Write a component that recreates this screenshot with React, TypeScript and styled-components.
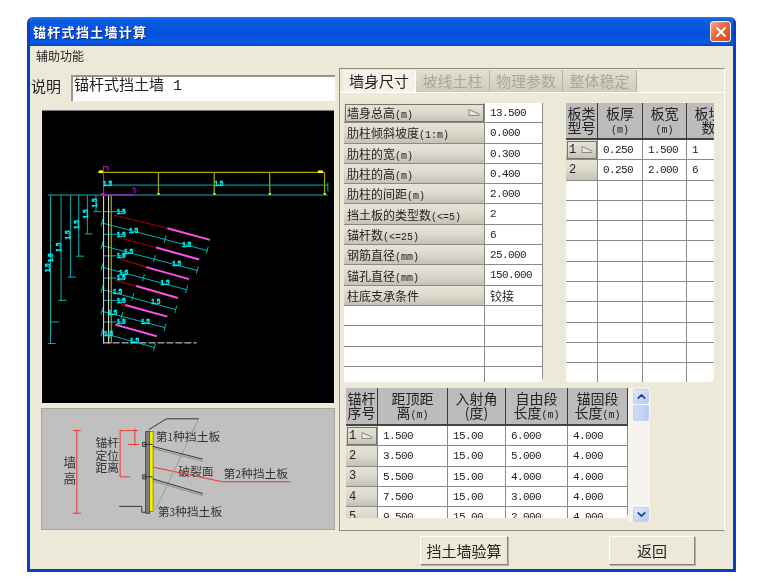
import React from 'react'
import styled, { createGlobalStyle } from 'styled-components'
import { ChevronUp, ChevronDown, X } from 'lucide-react'

const CJK = `"Liberation Mono", "Noto Sans CJK SC", monospace`

const GlobalStyle = createGlobalStyle`
  html, body { margin: 0; padding: 0; background: #fff; }
  body { font-family: ${CJK}; color: #222; }
`

const Page = styled.div`
  width: 760px;
  height: 584px;
  padding: 17px 0 0 27px;
  box-sizing: border-box;
  filter: blur(0.45px);
`

const Window = styled.div`
  width: 709px;
  height: 555px;
  box-sizing: border-box;
  border: 3px solid #0a3fc4;
  border-top: 0;
  border-radius: 6px 6px 0 0;
  background: #ece9d8;
  display: flex;
  flex-direction: column;
  overflow: hidden;
`

const TitleBar = styled.div`
  height: 29px;
  margin: 0 -3px;
  padding: 0 5px 0 6px;
  flex: none;
  display: flex;
  align-items: center;
  justify-content: space-between;
  background: linear-gradient(180deg, #1a78f0 0%, #0a5ce0 12%, #0650dc 60%, #0a5ae4 88%, #0443c0 100%);
`

const TitleText = styled.div`
  font-family: "Noto Sans CJK SC", sans-serif;
  font-size: 13px;
  font-weight: 700;
  letter-spacing: 1.3px;
  color: #fff;
  text-shadow: 1px 1px 1px #0a2a80;
`

const CloseButton = styled.div`
  width: 21px;
  height: 21px;
  box-sizing: border-box;
  border: 1px solid #f4f0ee;
  border-radius: 3px;
  background: linear-gradient(135deg, #f4ac8c 0%, #e8683e 45%, #d04420 100%);
  color: #fff;
  display: flex;
  align-items: center;
  justify-content: center;
`

const MenuBar = styled.div`
  height: 20px;
  flex: none;
  padding-left: 6px;
  font-size: 12px;
  line-height: 20px;
  font-family: "Noto Sans CJK SC", sans-serif;
`

const Main = styled.div`
  flex: none;
  height: 465px;
  display: flex;
`

const LeftColumn = styled.div`
  width: 309px;
  flex: none;
  display: flex;
  flex-direction: column;
  padding-top: 9px;
  box-sizing: border-box;
`

const NoteRow = styled.div`
  display: flex;
  align-items: center;
  height: 26px;
  padding-left: 1px;
`

const NoteLabel = styled.div`
  width: 40px;
  padding-bottom: 5px;
  font-family: "Noto Sans CJK SC", sans-serif;
  font-size: 15px;
`

const NoteInput = styled.div`
  width: 264px;
  height: 26px;
  box-sizing: border-box;
  padding-left: 1px;
  background: #fff;
  border-top: 2px solid #9a978a;
  border-left: 2px solid #9a978a;
  font-size: 15px;
  line-height: 20px;
  white-space: pre;
  font-family: ${CJK};
`

const Canvas = styled.div`
  width: 292px;
  height: 293px;
  margin: 9px 0 0 12px;
  background: #000;
  border-top: 1px solid #777;
  box-sizing: border-box;
`

const SchemePanel = styled.div`
  width: 294px;
  height: 122px;
  margin: 5px 0 0 11px;
  background: #c0c0c0;
  border: 1px solid #a9a79a;
  box-sizing: border-box;
`

const Drawing = styled.svg`
  display: block;
  width: 100%;
  height: 100%;
`

const TabPanel = styled.div`
  width: 386px;
  height: 463px;
  margin-top: 2px;
  box-sizing: border-box;
  border: 1px solid #8f8c7e;
  border-right-color: #fff;
  display: flex;
  flex-direction: column;
`

const TabStrip = styled.div`
  height: 22px;
  margin-top: 1px;
  padding-left: 3px;
  flex: none;
  display: flex;
`

const Tab = styled.div<{ $active?: boolean; $width: number }>`
  width: ${p => p.$width}px;
  flex: none;
  box-sizing: border-box;
  text-align: center;
  font-family: "Noto Sans CJK SC", sans-serif;
  font-size: 15px;
  line-height: 21px;
  color: ${p => (p.$active ? '#222' : '#a9a699')};
  background: ${p => (p.$active ? '#f4f2e6' : 'linear-gradient(180deg, #e2dfd0, #cfccbc)')};
  border-right: 1px solid ${p => (p.$active ? '#fff' : '#b5b2a4')};
`

const TabBody = styled.div`
  flex: 1;
  min-height: 0;
  display: flex;
  flex-direction: column;
  padding: 10px 0 0 4px;
  border-top: 1px solid #fff;
`

const TopTables = styled.div`
  display: flex;
  gap: 23px;
`

const Sheet = styled.div<{ $cols: string; $head: number; $width: number; $height: number }>`
  width: ${p => p.$width}px;
  height: ${p => p.$height}px;
  flex: none;
  overflow: hidden;
  display: grid;
  grid-template-columns: ${p => p.$cols};
  grid-template-rows: ${p => (p.$head ? `${p.$head}px ` : '')};
  grid-auto-rows: 20.3px;
  background: #fff;
  border-radius: 0 0 5px 0;
  font-size: 11px;
`

const HeadCell = styled.div`
  box-sizing: border-box;
  background: #bcbcbc;
  border-right: 1px solid #3a3a3a;
  border-bottom: 2px solid #444;
  font-family: "Noto Sans CJK SC", sans-serif;
  font-size: 14px;
  line-height: 14px;
  text-align: center;
  padding-top: 3px;
  white-space: nowrap;
  overflow: hidden;
`

const Unit = styled.span<{ $big?: boolean }>`
  font-family: "Liberation Mono", monospace;
  font-size: ${p => (p.$big ? 12 : 10)}px;
`

const RowHead = styled.div<{ $selected?: boolean }>`
  box-sizing: border-box;
  display: flex;
  align-items: center;
  justify-content: space-between;
  padding: 0 4px 0 3px;
  background: linear-gradient(180deg, #e6e3d8 0%, #dbd8cc 50%, #c4c1b6 100%);
  border-right: 1px solid #8a8a8a;
  border-bottom: 1px solid #8a8a8a;
  outline: ${p => (p.$selected ? '1px solid #77756c' : 'none')};
  outline-offset: -2px;
  font-family: "Noto Sans CJK SC", sans-serif;
  font-size: 12px;
  white-space: nowrap;
`

const Cell = styled.div`
  box-sizing: border-box;
  padding-left: 5px;
  border-right: 1px solid #8a8a8a;
  border-bottom: 1px solid #8a8a8a;
  background: #fff;
  font-size: 11px;
  letter-spacing: -0.6px;
  word-spacing: 0;
  line-height: 20px;
  white-space: nowrap;
  font-family: "Liberation Mono", "Noto Sans CJK SC", monospace;
`

const WideText = styled.span`
  font-family: "Noto Sans CJK SC", sans-serif;
  font-size: 12px;
  letter-spacing: 0;
`

const BottomRow = styled.div`
  display: flex;
  margin: 6px 0 0 2px;
`

const ScrollTrack = styled.div`
  width: 22px;
  height: 134px;
  flex: none;
  padding: 1px 1px 0 5px;
  box-sizing: border-box;
  background: #f5f4ee;
  display: flex;
  flex-direction: column;
`

const ScrollButton = styled.div`
  height: 15px;
  flex: none;
  border-radius: 2px;
  background: linear-gradient(135deg, #e4ecfc, #b4c8f4);
  border: 1px solid #c0d0f0;
  box-sizing: border-box;
  color: #1f3f90;
  display: flex;
  align-items: center;
  justify-content: center;
`

const ScrollThumb = styled.div`
  height: 16px;
  margin-top: 1px;
  flex: none;
  border-radius: 2px;
  background: linear-gradient(90deg, #cfdcfa, #b8ccf6);
  border: 1px solid #c4d2f2;
  box-sizing: border-box;
`

const ScrollGap = styled.div`
  flex: 1;
`

const Footer = styled.div`
  flex: 1;
  display: flex;
  align-items: flex-start;
  gap: 101px;
  padding: 5px 0 0 390px;
`

const DialogButton = styled.div<{ $width: number }>`
  width: ${p => p.$width}px;
  height: 29px;
  box-sizing: border-box;
  background: #ece9d8;
  border: 1px solid;
  border-color: #fff #8a887a #8a887a #fff;
  box-shadow: 1px 1px 0 #b5b2a4;
  font-family: "Noto Sans CJK SC", sans-serif;
  font-size: 15px;
  line-height: 27px;
  text-align: center;
`

const RowArrow = () => (
  <svg width="12" height="8" viewBox="0 0 12 8">
    <path d="M1 .5 L11 5 L11 6.5 L1 6.5 Z" fill="#e8e6dc" stroke="#8a887e" />
  </svg>
)

const HeadText = ({ lines }: { lines: [string, string] }) => {
  const m = lines[1].match(/^(.*?)(\(.*\))?$/)
  return (
    <>
      {lines[0]}
      <br />
      {m?.[1]}
      {m?.[2] && <Unit>{m[2]}</Unit>}
    </>
  )
}

const LabelText = ({ text }: { text: string }) => {
  const m = text.match(/^(.*?)(\(.*\))$/)
  if (!m) return <span>{text}</span>
  return (
    <span>
      {m[1]}
      <Unit>{m[2]}</Unit>
    </span>
  )
}

const wallRows: [string, string][] = [
  ['墙身总高(m)', '13.500'],
  ['肋柱倾斜坡度(1:m)', '0.000'],
  ['肋柱的宽(m)', '0.300'],
  ['肋柱的高(m)', '0.400'],
  ['肋柱的间距(m)', '2.000'],
  ['挡土板的类型数(<=5)', '2'],
  ['锚杆数(<=25)', '6'],
  ['钢筋直径(mm)', '25.000'],
  ['锚孔直径(mm)', '150.000'],
  ['柱底支承条件', '铰接'],
  ['', ''],
  ['', ''],
  ['', ''],
  ['', ''],
]

const plateRows = [
  ['1', '0.250', '1.500', '1'],
  ['2', '0.250', '2.000', '6'],
  ...Array.from({ length: 11 }, () => ['', '', '', '']),
]

const anchorRows = [
  ['1', '1.500', '15.00', '6.000', '4.000'],
  ['2', '3.500', '15.00', '5.000', '4.000'],
  ['3', '5.500', '15.00', '4.000', '4.000'],
  ['4', '7.500', '15.00', '3.000', '4.000'],
  ['5', '9.500', '15.00', '2.000', '4.000'],
]

// zoomed coordinates of the CAD picture -> page coordinates
const zx = (x: number) => 40 + x / 3
const zy = (y: number) => 150 + y / 3

const anchors = [
  [220, 193, 382, 233, 510, 268],
  [240, 263, 348, 291, 478, 327],
  [240, 325, 318, 350, 447, 386],
  [225, 390, 288, 407, 414, 443],
  [240, 460, 255, 464, 382, 499],
  [225, 523, 225, 523, 350, 558],
]

const anchorDims = [
  [185, 217, 502, 300, 375, 267],
  [185, 285, 472, 360, 343, 325],
  [185, 350, 440, 418, 310, 383],
  [185, 417, 407, 478, 278, 440],
  [185, 483, 375, 532, 245, 497],
  [185, 548, 343, 592, 210, 555],
]

const leftDims = [
  [30, 580],
  [62, 450],
  [90, 380],
  [115, 317],
  [141, 250],
  [167, 183],
]

const nailRows = [183, 251, 316, 383, 450, 515]

const dimTags = [
  [202, 98], [537, 98], [280, 240], [440, 283], [265, 302], [410, 340], [250, 365], [375, 397],
  [232, 425], [347, 455], [217, 488], [316, 513], [205, 550], [283, 572],
  [243, 184], [243, 251], [243, 316], [243, 383], [243, 450], [243, 515],
]

const sideTags = [
  [22, 352], [29, 322], [55, 290], [83, 253], [109, 222], [135, 190], [162, 157],
]

const CadDrawing = () => (
  <Drawing viewBox="42 110 292 293">
    <g stroke="#a8a800" fill="none" strokeWidth="1.2">
      <line x1={zx(175)} y1={zy(65)} x2={zx(855)} y2={zy(65)} />
      {[355, 523, 690, 855].map(x => (
        <line key={x} x1={zx(x)} y1={zy(65)} x2={zx(x)} y2={zy(130)} />
      ))}
      <line x1={zx(213)} y1={zy(133)} x2={zx(213)} y2={zy(580)} />
    </g>
    <rect x={zx(175)} y={zy(59)} width="5" height="2.6" fill="#ffff00" />
    <rect x={zx(835)} y={zy(59)} width="5" height="2.6" fill="#ffff00" />
    {[355, 523, 690, 855].map(x => (
      <rect key={x} x={zx(x) - 1} y={zy(127)} width="2.4" height="2" fill="#ffff00" />
    ))}
    <g stroke="#00b4b4" fill="none" strokeWidth="1">
      <line x1={zx(190)} y1={zy(103)} x2={zx(865)} y2={zy(103)} />
      <line x1={zx(865)} y1={zy(96)} x2={zx(865)} y2={zy(122)} />
      <line x1={zx(22)} y1={zy(133)} x2={zx(865)} y2={zy(133)} />
      {leftDims.map(([x, y]) => (
        <g key={x}>
          <line x1={zx(x)} y1={zy(133)} x2={zx(x)} y2={zy(y)} />
          <line x1={zx(x - 8)} y1={zy(y)} x2={zx(x + 16)} y2={zy(y)} />
        </g>
      ))}
      <line x1={zx(30)} y1={zy(515)} x2={zx(55)} y2={zy(515)} />
      {nailRows.map(y => (
        <line key={y} x1={zx(190)} y1={zy(y)} x2={zx(255)} y2={zy(y)} />
      ))}
      {anchorDims.map(([x1, y1, x2, y2, tx, ty]) => (
        <g key={y1}>
          <line x1={zx(x1)} y1={zy(y1)} x2={zx(x2)} y2={zy(y2)} />
          <line x1={zx(x1 + 3)} y1={zy(y1 - 12)} x2={zx(x1 - 3)} y2={zy(y1 + 10)} />
          <line x1={zx(x2 + 3)} y1={zy(y2 - 12)} x2={zx(x2 - 3)} y2={zy(y2 + 10)} />
          <line x1={zx(tx + 3)} y1={zy(ty - 12)} x2={zx(tx - 3)} y2={zy(ty + 10)} />
        </g>
      ))}
    </g>
    <g stroke="#e4e4e4" fill="none" strokeWidth="1">
      <line x1={zx(190)} y1={zy(133)} x2={zx(190)} y2={zy(580)} />
      <line x1={zx(205)} y1={zy(133)} x2={zx(205)} y2={zy(580)} />
      <line x1={zx(190)} y1={zy(578)} x2={zx(470)} y2={zy(578)} strokeDasharray="7 2" />
    </g>
    {anchors.map(([x1, y1, x2, y2, x3, y3]) => (
      <g key={y1} fill="none">
        <line x1={zx(x1)} y1={zy(y1)} x2={zx(x2)} y2={zy(y2)} stroke="#a00000" strokeWidth="1.2" />
        <line x1={zx(x2)} y1={zy(y2)} x2={zx(x3)} y2={zy(y3)} stroke="#ff50e8" strokeWidth="2" />
      </g>
    ))}
    <g stroke="#f000f0" fill="none" strokeWidth="1">
      <path d={`M${zx(190)} ${zy(45)} V${zy(133)} H${zx(280)}`} />
      <path d={`M${zx(190)} ${zy(48)} H${zx(203)} V${zy(60)}`} />
      <path d={`M${zx(276)} ${zy(112)} H${zx(284)} V${zy(128)}`} />
    </g>
    <rect x={zx(183)} y={zy(127)} width="3" height="3" fill="#f000f0" />
    <g fill="#00f4f4" fontFamily="Liberation Sans, sans-serif" fontSize="6.5" fontWeight="700" textAnchor="middle" stroke="#00f4f4" strokeWidth=".3">
      {dimTags.map(([x, y]) => (
        <text key={`${x}-${y}`} x={zx(x)} y={zy(y) + 2.4}>1.5</text>
      ))}
      {sideTags.map(([x, y]) => (
        <text key={`${x}-${y}`} transform={`translate(${zx(x) + 2.4} ${zy(y)}) rotate(-90)`}>1.5</text>
      ))}
    </g>
  </Drawing>
)

const schemeFont = '"Noto Sans CJK SC", sans-serif'

const SchemeDrawing = () => (
  <Drawing viewBox="41 408 294 122">
    <g fontFamily={schemeFont} fontSize="12" fill="#333" textAnchor="middle">
      <text x="68" y="467" fontSize="13">墙</text>
      <text x="68" y="483" fontSize="13">高</text>
      <text x="106" y="447">锚杆</text>
      <text x="106" y="460">定位</text>
      <text x="106" y="472">距离</text>
      <text x="188" y="441">第<tspan fontSize="10">1</tspan>种挡土板</text>
      <text x="196" y="476">破裂面</text>
      <text x="257" y="478">第<tspan fontSize="10">2</tspan>种挡土板</text>
      <text x="190" y="517">第<tspan fontSize="10">3</tspan>种挡土板</text>
    </g>
    <g stroke="#f03030" strokeWidth="1" fill="none">
      <path d="M75 429 V514 M71 430 H79 M71 514 H79" />
      <path d="M119 477 H129 M119 477 V430 M119 430 H137 M134 428 V445 M127 444 H138" />
      <path d="M152 467 L223 482 H292" />
    </g>
    <path d="M148 429 L166 418 H199" stroke="#333" fill="none" />
    <path d="M199 418 L155 510" stroke="#999" fill="none" />
    <path d="M118 507 H141 V513 H146" stroke="#333" fill="none" />
    <rect x="145" y="431" width="4" height="83" fill="#808080" stroke="#333" strokeWidth=".8" />
    <rect x="149" y="431" width="3.5" height="81" fill="#f0f000" stroke="#444" strokeWidth=".5" />
    <g stroke="#333" strokeWidth="1" fill="none">
      <path d="M143 444 H152 M143 477 H152" />
      <rect x="142" y="442" width="3" height="4" />
      <rect x="142" y="475" width="3" height="4" />
      <path d="M152 446 L203 459 M152 479 L203 494" />
    </g>
    <path d="M152 448 L203 461 M152 481 L203 496" stroke="#999" strokeWidth="1.5" fill="none" />
  </Drawing>
)

export default function App() {
  return (
    <Page>
      <GlobalStyle />
      <Window>
        <TitleBar>
          <TitleText>锚杆式挡土墙计算</TitleText>
          <CloseButton>
            <X size={16} strokeWidth={3} />
          </CloseButton>
        </TitleBar>
        <MenuBar>辅助功能</MenuBar>
        <Main>
          <LeftColumn>
            <NoteRow>
              <NoteLabel>说明</NoteLabel>
              <NoteInput>锚杆式挡土墙 1</NoteInput>
            </NoteRow>
            <Canvas>
              <CadDrawing />
            </Canvas>
            <SchemePanel>
              <SchemeDrawing />
            </SchemePanel>
          </LeftColumn>
          <TabPanel>
            <TabStrip>
              <Tab $active $width={73}>墙身尺寸</Tab>
              <Tab $width={74}>坡线土柱</Tab>
              <Tab $width={73}>物理参数</Tab>
              <Tab $width={74}>整体稳定</Tab>
            </TabStrip>
            <TabBody>
              <TopTables>
                <Sheet $cols="141px 58px" $head={0} $width={199} $height={279}>
                  {wallRows.map(([label, value], i) => (
                    <React.Fragment key={i}>
                      {label ? (
                        <RowHead $selected={i === 0}>
                          <LabelText text={label} />
                          {i === 0 && <RowArrow />}
                        </RowHead>
                      ) : (
                        <Cell />
                      )}
                      <Cell>{value === '铰接' ? <WideText>{value}</WideText> : value}</Cell>
                    </React.Fragment>
                  ))}
                </Sheet>
                <Sheet $cols="32px 45px 44px 44px" $head={37} $width={148} $height={279}>
                  <HeadCell>板类<br />型号</HeadCell>
                  <HeadCell><HeadText lines={['板厚', '(m)']} /></HeadCell>
                  <HeadCell><HeadText lines={['板宽', '(m)']} /></HeadCell>
                  <HeadCell>板块<br />数</HeadCell>
                  {plateRows.map((row, i) => (
                    <React.Fragment key={i}>
                      {row[0] ? (
                        <RowHead $selected={i === 0}>
                          <Unit $big>{row[0]}</Unit>
                          {i === 0 && <RowArrow />}
                        </RowHead>
                      ) : (
                        <Cell />
                      )}
                      <Cell>{row[1]}</Cell>
                      <Cell>{row[2]}</Cell>
                      <Cell>{row[3]}</Cell>
                    </React.Fragment>
                  ))}
                </Sheet>
              </TopTables>
              <BottomRow>
                <Sheet $cols="32px 70px 58px 62px 60px" $head={38} $width={282} $height={130}>
                  <HeadCell>锚杆<br />序号</HeadCell>
                  <HeadCell><HeadText lines={['距顶距', '离(m)']} /></HeadCell>
                  <HeadCell>入射角<br />(度)</HeadCell>
                  <HeadCell><HeadText lines={['自由段', '长度(m)']} /></HeadCell>
                  <HeadCell><HeadText lines={['锚固段', '长度(m)']} /></HeadCell>
                  {anchorRows.map((row, i) => (
                    <React.Fragment key={row[0]}>
                      <RowHead $selected={i === 0}>
                        <Unit $big>{row[0]}</Unit>
                        {i === 0 && <RowArrow />}
                      </RowHead>
                      <Cell>{row[1]}</Cell>
                      <Cell>{row[2]}</Cell>
                      <Cell>{row[3]}</Cell>
                      <Cell>{row[4]}</Cell>
                    </React.Fragment>
                  ))}
                </Sheet>
                <ScrollTrack>
                  <ScrollButton><ChevronUp size={13} strokeWidth={3} /></ScrollButton>
                  <ScrollThumb />
                  <ScrollGap />
                  <ScrollButton><ChevronDown size={13} strokeWidth={3} /></ScrollButton>
                </ScrollTrack>
              </BottomRow>
            </TabBody>
          </TabPanel>
        </Main>
        <Footer>
          <DialogButton $width={88}>挡土墙验算</DialogButton>
          <DialogButton $width={86}>返回</DialogButton>
        </Footer>
      </Window>
    </Page>
  )
}
